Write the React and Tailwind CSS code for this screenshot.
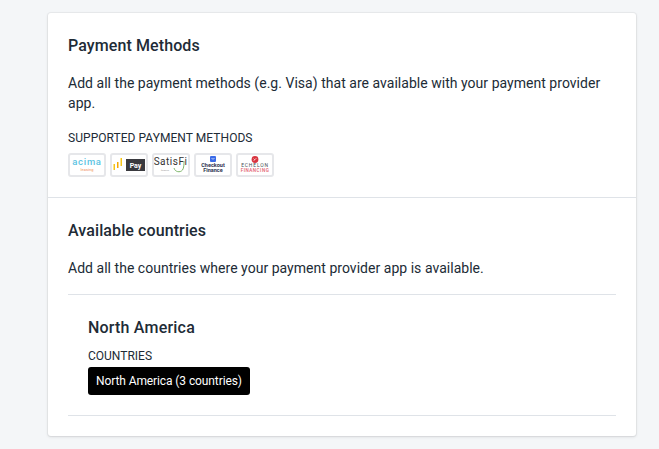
import React from 'react';

const font = 'Roboto, "Noto Sans", sans-serif';

function Logo({ children }) {
  return (
    <div className="w-[38px] h-[24px] rounded-[3px] border-2 border-[#e6e7ea] bg-white overflow-hidden">
      <svg width="34" height="20" viewBox="0 0 34 20" className="block">
        {children}
      </svg>
    </div>
  );
}

const Acima = () => (
  <Logo>
    <text x="17" y="10" textAnchor="middle" fontSize="9.500" fontWeight="500" letterSpacing="0.7" fill="#5cc3e2" fontFamily="Roboto">acima</text>
    <text x="17" y="16" textAnchor="middle" fontSize="4" fill="#f0925c" fontFamily="Roboto">leasing</text>
  </Logo>
);

const PayLogo = () => (
  <Logo>
    <rect x="1.500" y="9" width="1.500" height="6" fill="#f5c518" />
    <rect x="5" y="7" width="1.500" height="6" fill="#f5a800" />
    <rect x="8.500" y="3" width="1.500" height="8" fill="#f5c518" />
    <rect x="14" y="4" width="19" height="12" fill="#3a3a3f" />
    <text x="23.500" y="13" textAnchor="middle" fontSize="7" fontWeight="700" fill="#ffffff" fontFamily="Roboto">Pay</text>
  </Logo>
);

const Satisfi = () => (
  <Logo>
    <text x="16.500" y="10" textAnchor="middle" fontSize="10" letterSpacing="0.5" fill="#333333" fontFamily="Roboto">SatisFi</text>
    <path d="M20 13c1 4 6 5 8.500 2c1.500-2 1.500-6 1.500-9" fill="none" stroke="#6fae5a" strokeWidth="0.9" />
    <text x="11" y="15.500" textAnchor="middle" fontSize="2.500" fill="#999999" fontFamily="Roboto">finance</text>
  </Logo>
);

const Checkout = () => (
  <Logo>
    <rect x="14" y="1" width="6" height="6" rx="1" fill="#3b6be8" />
    <path d="M15.500 3c.5 1.500 2.500 1.500 3 0" fill="none" stroke="#ffffff" strokeWidth="0.6" />
    <text x="17" y="12" textAnchor="middle" fontSize="5.500" fontWeight="700" fill="#2f3450" fontFamily="Roboto">Checkout</text>
    <text x="17" y="17" textAnchor="middle" fontSize="5.500" fontWeight="700" fill="#2f3450" fontFamily="Roboto">Finance</text>
  </Logo>
);

const Echelon = () => (
  <Logo>
    <circle cx="17" cy="4.500" r="3.400" fill="#d8343f" />
    <path d="M15.500 6l3-3M15.500 3.500l1.500 1.500" stroke="#ffffff" strokeWidth="0.6" fill="none" />
    <text x="17" y="12" textAnchor="middle" fontSize="5" fill="#4a4f55" letterSpacing="0.8" fontFamily="Roboto">ECHELON</text>
    <text x="17" y="17" textAnchor="middle" fontSize="4.600" fontWeight="500" fill="#e2596a" letterSpacing="0.5" fontFamily="Roboto">FINANCING</text>
  </Logo>
);

export default function App() {
  return (
    <div className="min-h-[449px] bg-[#f4f6f8] pt-[13px] pl-[48px] pr-[23px] text-[#212b36]" style={{ fontFamily: font }}>
      <div className="bg-white rounded-[3px] shadow-[0_0_0_1px_rgba(63,63,68,0.05),0_1px_3px_0_rgba(63,63,68,0.15)]">
        <section className="p-5 h-[185px] border-b border-[#dfe3e8]">
          <h2 className="text-base leading-6 font-medium mt-[1px] tracking-[0.1px]">Payment Methods</h2>
          <p className="text-sm leading-5 mt-[15px] tracking-[0.03px]">
            Add all the payment methods (e.g. Visa) that are available with your payment provider app.
          </p>
          <div className="text-xs leading-4 mt-[17px] tracking-[0.05px]">SUPPORTED PAYMENT METHODS</div>
          <div className="flex gap-1 mt-[7px]">
            <Acima />
            <PayLogo />
            <Satisfi />
            <Checkout />
            <Echelon />
          </div>
        </section>
        <section className="px-5 pt-[21px] pb-5">
          <h2 className="text-base leading-6 font-medium tracking-[0.1px]">Available countries</h2>
          <p className="text-sm leading-5 mt-[15px] tracking-[0.03px]">
            Add all the countries where your payment provider app is available.
          </p>
          <div className="mt-4 border-t border-[#dfe3e8] pt-[21px] pb-5 border-b px-5">
            <h3 className="text-base leading-6 font-medium tracking-[0.2px]">North America</h3>
            <div className="text-xs leading-4 mt-[8px]">COUNTRIES</div>
            <div className="mt-[3px] inline-flex items-center h-[28px] px-2 rounded-[3px] bg-black text-white text-xs tracking-[-0.1px]">
              North America (3 countries)
            </div>
          </div>
        </section>
      </div>
    </div>
  );
}
